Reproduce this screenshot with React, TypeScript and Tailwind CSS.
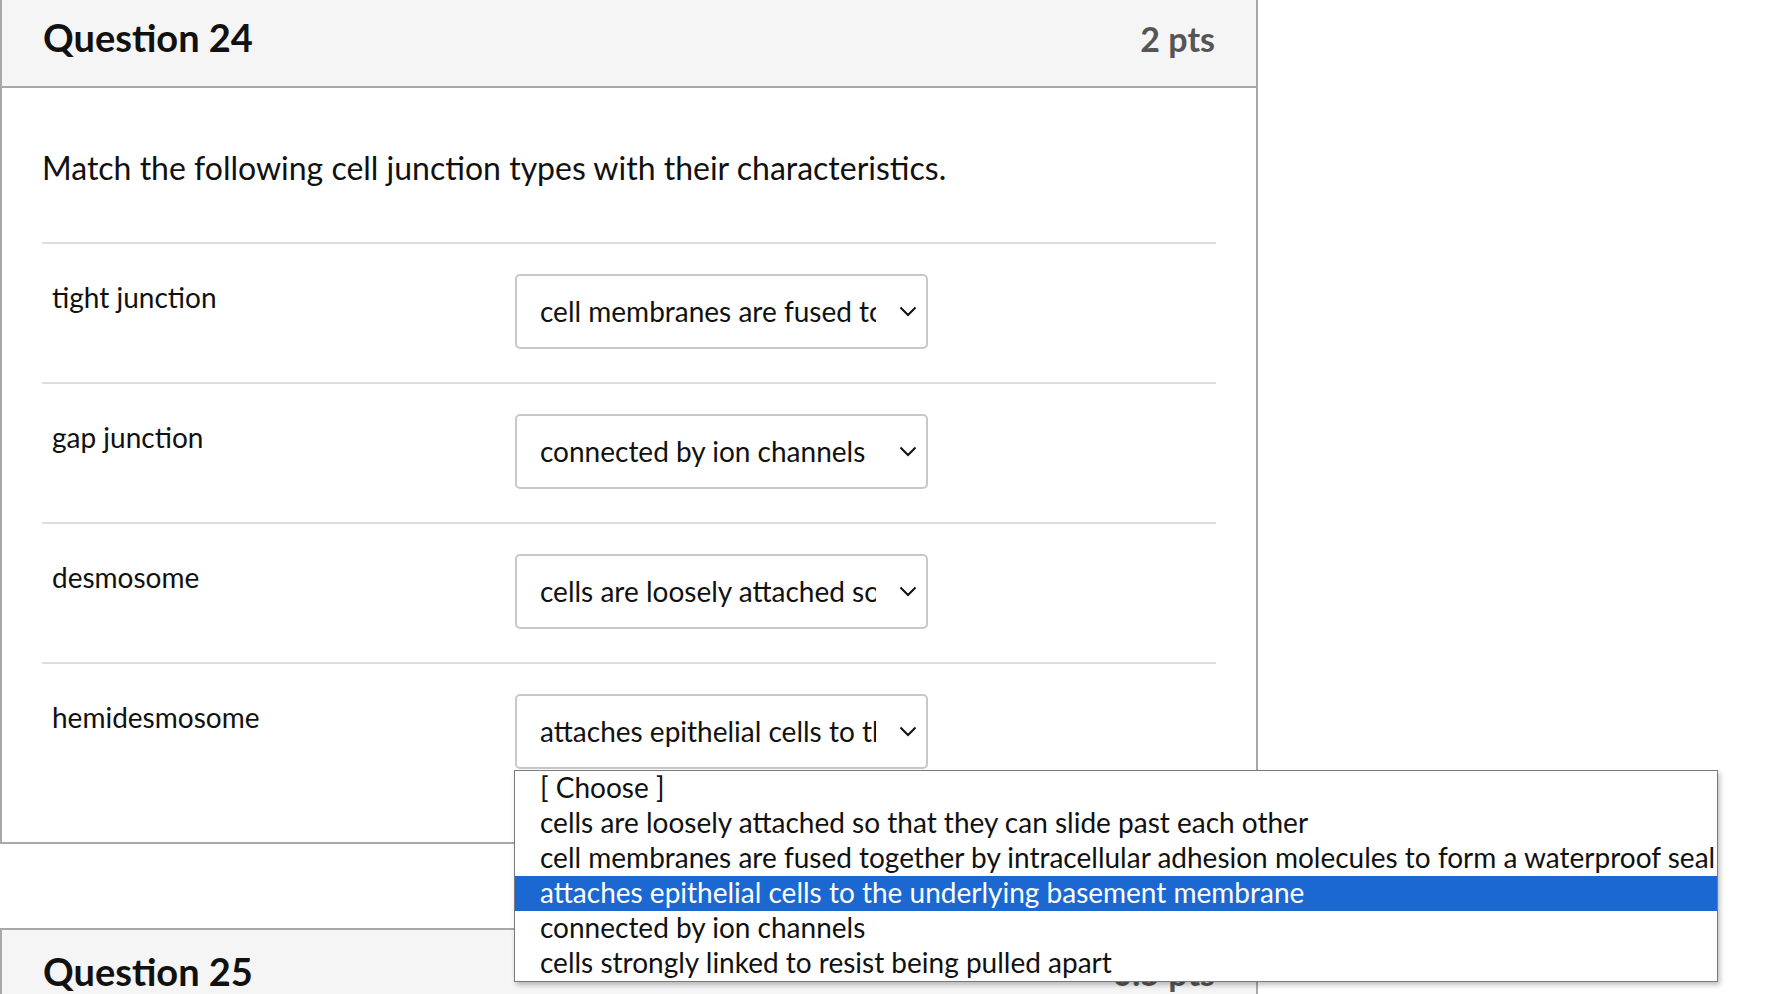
import React from 'react';

const rows = [
  { label: 'tight junction', value: 'cell membranes are fused together by intracellular adhesion molecules to form a waterproof seal' },
  { label: 'gap junction', value: 'connected by ion channels' },
  { label: 'desmosome', value: 'cells are loosely attached so that they can slide past each other' },
  { label: 'hemidesmosome', value: 'attaches epithelial cells to the underlying basement membrane' },
];

const options = [
  '[ Choose ]',
  'cells are loosely attached so that they can slide past each other',
  'cell membranes are fused together by intracellular adhesion molecules to form a waterproof seal',
  'attaches epithelial cells to the underlying basement membrane',
  'connected by ion channels',
  'cells strongly linked to resist being pulled apart',
];

function Chevron() {
  return (
    <svg width="18" height="11" viewBox="0 0 18 11" className="shrink-0">
      <path d="M1.5 1.5 L9 9 L16.5 1.5" fill="none" stroke="#111" strokeWidth="2" />
    </svg>
  );
}

function FakeSelect({ value, open }: { value: string; open?: boolean }) {
  return (
    <div className="relative">
      <div className="flex h-[75px] w-[413px] items-center rounded-[5px] border-2 border-[#c8c8c8] bg-white pb-[2px] pl-[23px] pr-[9px]">
        <span className="w-[336px] overflow-hidden whitespace-nowrap text-[28px] leading-[34px] text-[#111]">{value}</span>
        <div className="ml-auto flex items-center pt-[2px]">
          <Chevron />
        </div>
      </div>
      {open && (
        <div className="absolute left-[-1px] top-[76px] z-10 w-[1204px] border border-[#7a7a7a] bg-white shadow-[2px_3px_5px_rgba(0,0,0,0.25)]">
          {options.map((o, i) => (
            <div
              key={o}
              className={`h-[35px] whitespace-nowrap pl-[25px] text-[28px] leading-[33px] ${i === 3 ? 'bg-[#1b68d3] text-white' : 'text-[#111]'}`}
            >
              {o}
            </div>
          ))}
        </div>
      )}
    </div>
  );
}

export default function App() {
  return (
    <div className="min-h-screen overflow-hidden bg-white font-['Lato',sans-serif]">
      {/* Question 24 */}
      <div className="-mt-[6px] w-[1258px] border-2 border-[#a8a8a8]">
        <div className="flex h-[92px] items-baseline justify-between border-b-2 border-[#a8a8a8] bg-[#f5f5f5] px-[41px] pt-[19px]">
          <h2 className="text-[38px] font-bold leading-[45px] text-[#111]">Question 24</h2>
          <span className="text-[34px] font-bold leading-[45px] text-[#555]">2 pts</span>
        </div>
        <div className="px-[40px] pb-[40px] pt-[56px]">
          <p className="mb-[50px] text-[32px] leading-[48px] text-[#111]">
            Match the following cell junction types with their characteristics.
          </p>
          {rows.map((r, i) => (
            <div key={r.label} className="flex border-t-2 border-[#dddddd] pb-[33px] pt-[30px]">
              <div className="w-[473px] pl-[10px] pt-[3px] text-[28px] leading-[40px] text-[#111]">{r.label}</div>
              <FakeSelect value={r.value} open={i === 3} />
            </div>
          ))}
        </div>
      </div>

      {/* Question 25 */}
      <div className="mt-[84px] w-[1258px] border-2 border-[#a8a8a8]">
        <div className="flex h-[90px] items-baseline justify-between bg-[#f5f5f5] px-[41px] pt-[19px]">
          <h2 className="text-[38px] font-bold leading-[45px] text-[#111]">Question 25</h2>
          <span className="text-[34px] font-bold leading-[45px] text-[#555]">0.5 pts</span>
        </div>
      </div>
    </div>
  );
}
